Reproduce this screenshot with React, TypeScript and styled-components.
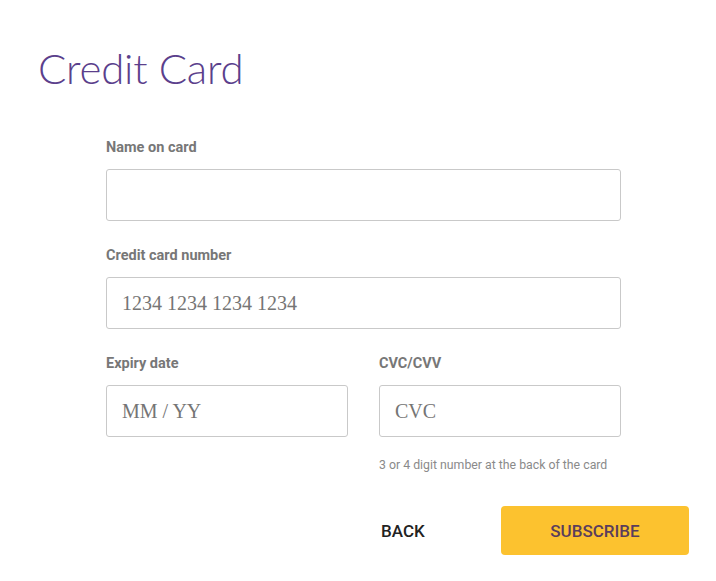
import React from "react";
import styled, { createGlobalStyle } from "styled-components";

const Global = createGlobalStyle`
  html, body { margin: 0; padding: 0; background: #fff; }
  body { font-family: Roboto, "Liberation Sans", sans-serif; }
  * { box-sizing: border-box; }
`;

const Page = styled.div`
  width: 716px;
  min-height: 581px;
  padding: 42px 27px 0 38px;
  display: flex;
  flex-direction: column;
`;

const Title = styled.h1`
  margin: 0;
  font-family: Lato, "Open Sans", sans-serif;
  font-weight: 300;
  font-size: 42px;
  line-height: 52px;
  color: #5b3f8c;
  letter-spacing: -0.2px;
`;

const Form = styled.form`
  margin: 46px 0 0 68px;
  width: 515px;
  display: flex;
  flex-direction: column;
  gap: 27px;
`;

const Row = styled.div`
  display: grid;
  grid-template-columns: 1fr 1fr;
  column-gap: 31px;
`;

const Field = styled.div`
  display: flex;
  flex-direction: column;
`;

const Label = styled.label`
  font-size: 14.5px;
  font-weight: 700;
  color: #777;
  line-height: 16px;
  margin-bottom: 13px;
`;

const Input = styled.input`
  height: 52px;
  width: 100%;
  border: 1px solid #c9c9c9;
  border-radius: 3px;
  padding: 0 15px;
  font-family: "Liberation Serif", serif;
  font-size: 20px;
  color: #333;
  outline: none;
  &::placeholder { color: #757575; }
`;

const Hint = styled.div`
  margin-top: 21px;
  font-size: 12.3px;
  color: #8a8a8a;
  line-height: 14px;
`;

const Actions = styled.div`
  margin-top: 34px;
  display: flex;
  justify-content: flex-end;
  align-items: center;
`;

const BackButton = styled.button`
  background: none;
  border: none;
  font-family: Roboto, sans-serif;
  font-weight: 500;
  font-size: 17px;
  color: #222;
  width: 120px;
  height: 49px;
  padding: 0;
  text-align: left;
  cursor: pointer;
`;

const SubscribeButton = styled.button`
  width: 188px;
  height: 49px;
  border: none;
  border-radius: 4px;
  background: #fcc22f;
  color: #5a3d5c;
  font-family: Roboto, sans-serif;
  font-weight: 500;
  font-size: 17px;
  cursor: pointer;
`;

export default function App() {
  return (
    <Page>
      <Global />
      <Title>Credit Card</Title>
      <Form onSubmit={(e) => e.preventDefault()}>
        <Field>
          <Label>Name on card</Label>
          <Input />
        </Field>
        <Field>
          <Label>Credit card number</Label>
          <Input placeholder="1234 1234 1234 1234" />
        </Field>
        <Row>
          <Field>
            <Label>Expiry date</Label>
            <Input placeholder="MM / YY" />
          </Field>
          <Field>
            <Label>CVC/CVV</Label>
            <Input placeholder="CVC" />
            <Hint>3 or 4 digit number at the back of the card</Hint>
          </Field>
        </Row>
      </Form>
      <Actions>
        <BackButton>BACK</BackButton>
        <SubscribeButton>SUBSCRIBE</SubscribeButton>
      </Actions>
    </Page>
  );
}
